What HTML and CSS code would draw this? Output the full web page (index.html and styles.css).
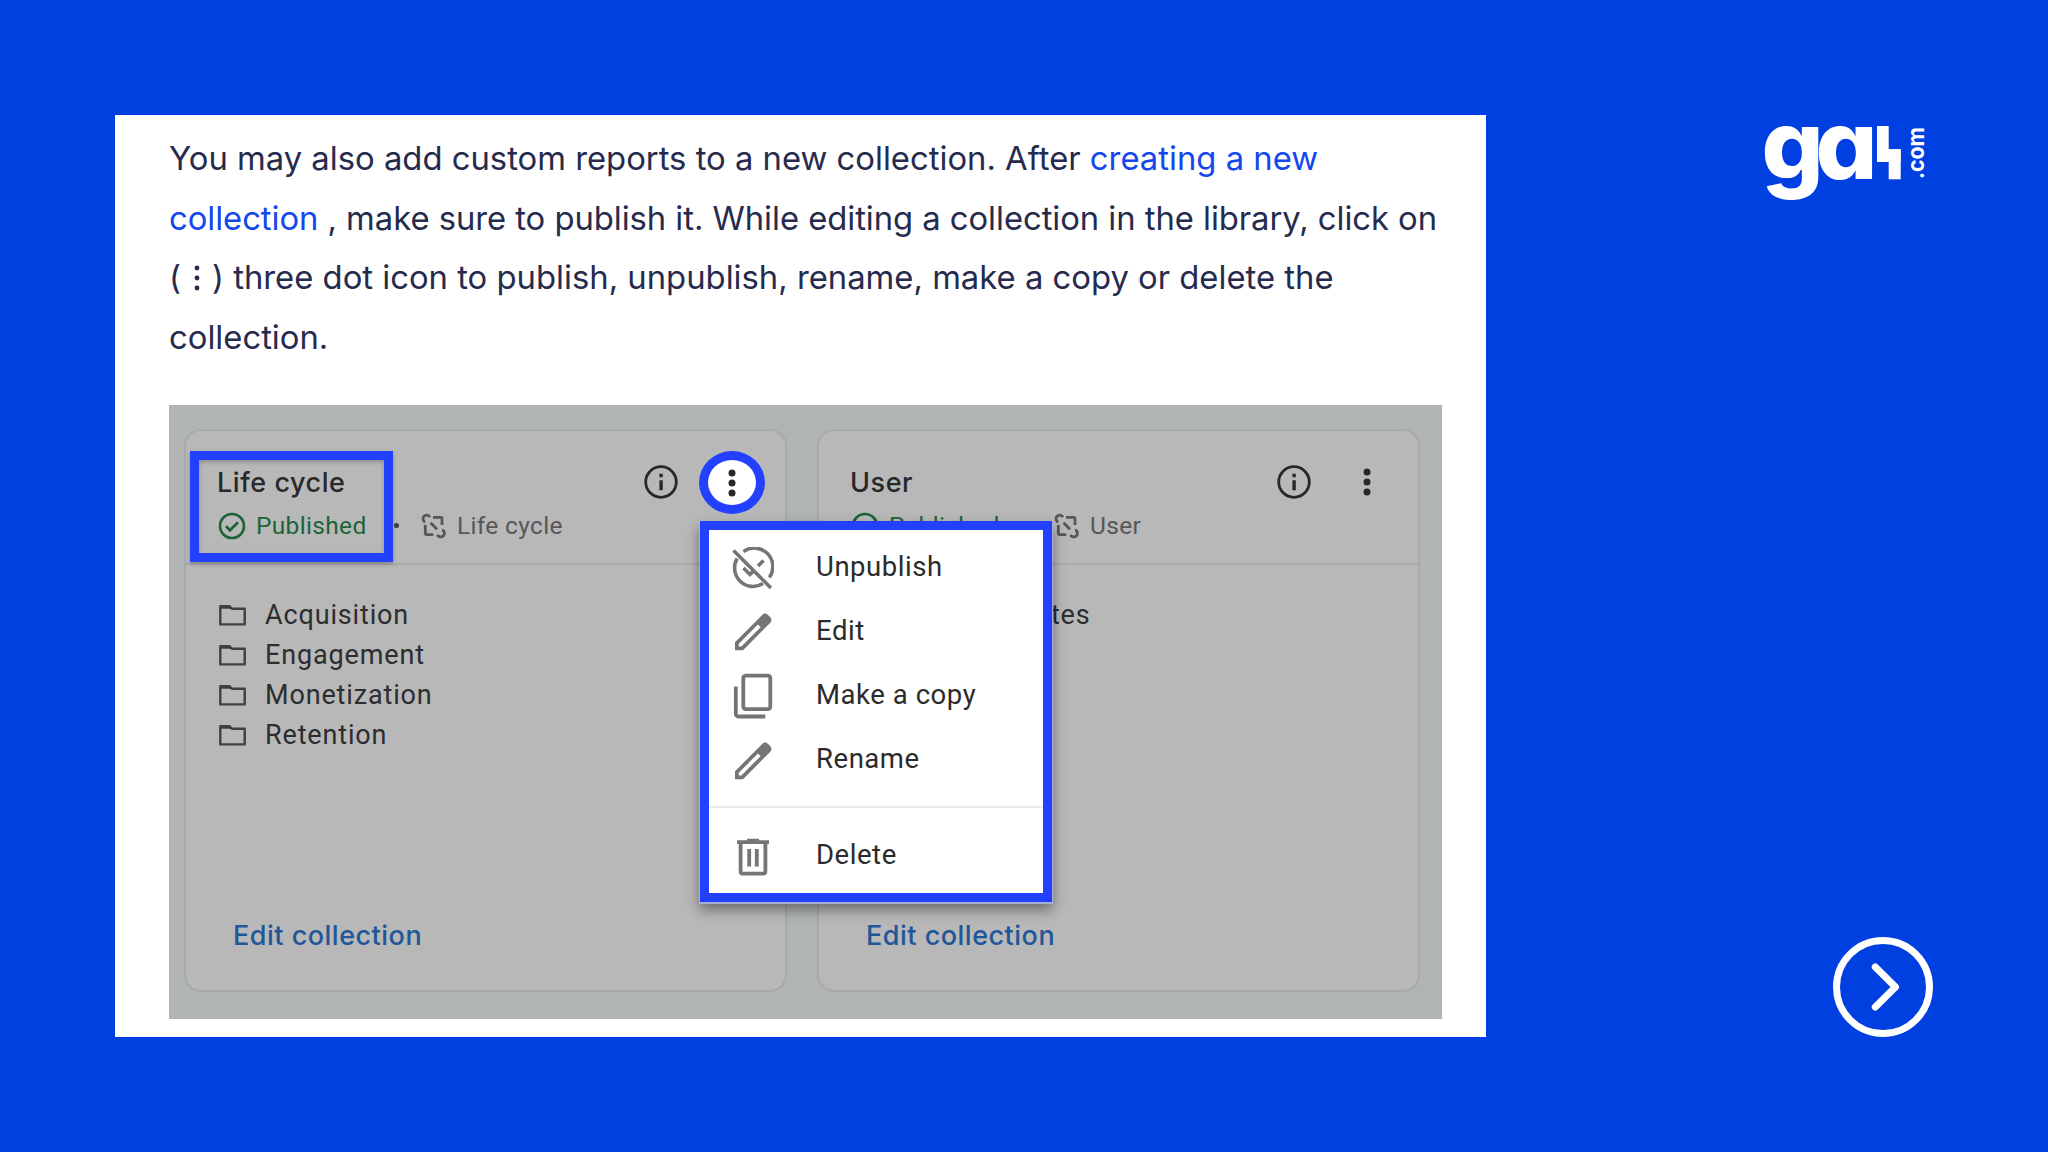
FILE: index.html
```html
<!DOCTYPE html>
<html lang="en">
<head>
    <meta charset="UTF-8">
    <meta name="viewport" content="width=device-width, initial-scale=1.0">
    <title>Publish a collection - ga4.com</title>
    <link rel="stylesheet" href="styles.css">
</head>
<body>
    <!-- Shared icons -->
    <svg class="sprite" aria-hidden="true">
        <symbol id="check-circle" viewBox="0 0 28 28">
            <circle cx="14" cy="14" r="12" fill="none" stroke="currentColor" stroke-width="2.6"/>
            <path d="M8 14.2l4 4 8-8" fill="none" stroke="currentColor" stroke-width="2.8"/>
        </symbol>
        <symbol id="linked" viewBox="0 0 26 26">
            <g fill="none" stroke="currentColor" stroke-width="2.8">
                <path d="M4.2 9.2A3.7 3.7 0 1 1 9 4.2"/>
                <path d="M12 4.4h8a1 1 0 0 1 1 1V12"/>
                <path d="M4.3 12v8.6a1 1 0 0 0 1 1h7"/>
                <path d="M21.2 16.8a3.7 3.7 0 1 1-4.8 5"/>
                <path d="M9.6 9.8l6.4 6.4"/>
            </g>
        </symbol>
        <symbol id="info" viewBox="0 0 34 34">
            <circle cx="17" cy="17" r="15.3" fill="none" stroke="currentColor" stroke-width="2.8"/>
            <path d="M15.4 15.3h3.4v10h-3.4zM15.4 8.8h3.4v3.4h-3.4z" fill="currentColor"/>
        </symbol>
        <symbol id="dots" viewBox="0 0 10 30">
            <circle cx="5" cy="5" r="3.5"/>
            <circle cx="5" cy="15" r="3.5"/>
            <circle cx="5" cy="25" r="3.5"/>
        </symbol>
        <symbol id="folder" viewBox="0 0 27 22">
            <path d="M1.3 2.3h8.9l2.6 2.4h12.9v15.7H1.3z" fill="none" stroke="currentColor" stroke-width="2.4" stroke-linejoin="round"/>
            <path d="M1 1h10l2.7 3.8H1z" fill="currentColor"/>
        </symbol>
        <symbol id="pencil" viewBox="0 0 38 38">
            <path fill="currentColor" fill-rule="evenodd" d="M1 29.2L28.2 2a4.2 4.2 0 0 1 5.8 0l2.1 2.1a4.2 4.2 0 0 1 0 5.8L9 37.2H1zM4.8 30.8v2.6h2.6L26.6 14.2l-2.7-2.6z"/>
        </symbol>
    </svg>

    <main class="article">
        <p class="article-text">
            You may also add custom reports to a new collection. After <a href="#">creating a new</a><br>
            <span class="tight"><a href="#">collection</a> , make sure to publish it. While editing a collection in the library, click on</span><br>
            (<svg class="inline-dots" viewBox="0 0 6 26"><circle cx="3" cy="3" r="2.4"/><circle cx="3" cy="13" r="2.4"/><circle cx="3" cy="23" r="2.4"/></svg>) three dot icon to publish, unpublish, rename, make a copy or delete the<br>
            collection.
        </p>

        <div class="library">
            <section class="card">
                <header class="card-head">
                    <div class="card-title">
                        <h2>Life cycle</h2>
                        <svg class="info-icon"><use href="#info"/></svg>
                        <svg class="dots-icon"><use href="#dots"/></svg>
                    </div>
                    <div class="card-meta">
                        <svg class="status-icon"><use href="#check-circle"/></svg>
                        <span class="status">Published</span>
                        <span class="separator"></span>
                        <svg class="linked-icon"><use href="#linked"/></svg>
                        <span>Life cycle</span>
                    </div>
                </header>
                <ul class="topics">
                    <li><svg><use href="#folder"/></svg>Acquisition</li>
                    <li><svg><use href="#folder"/></svg>Engagement</li>
                    <li><svg><use href="#folder"/></svg>Monetization</li>
                    <li><svg><use href="#folder"/></svg>Retention</li>
                </ul>
                <a class="edit-link" href="#">Edit collection</a>
            </section>

            <section class="card">
                <header class="card-head">
                    <div class="card-title">
                        <h2>User</h2>
                        <svg class="info-icon"><use href="#info"/></svg>
                        <svg class="dots-icon"><use href="#dots"/></svg>
                    </div>
                    <div class="card-meta">
                        <svg class="status-icon"><use href="#check-circle"/></svg>
                        <span class="status">Published</span>
                        <span class="separator"></span>
                        <svg class="linked-icon"><use href="#linked"/></svg>
                        <span>User</span>
                    </div>
                </header>
                <ul class="topics">
                    <li><svg><use href="#folder"/></svg>User attributes</li>
                </ul>
                <a class="edit-link" href="#">Edit collection</a>
            </section>

            <!-- Highlights and the open menu lie over the cards -->
            <div class="highlight-box"></div>
            <div class="highlight-circle"><svg><use href="#dots"/></svg></div>

            <ul class="menu">
                <li>
                    <svg viewBox="0 0 42 42" width="42" height="42" fill="none" stroke="currentColor" stroke-width="3.6">
                        <path d="M11.5 4.6A18.5 18.5 0 0 1 37.3 30.5"/>
                        <path d="M5.2 11.5A18.5 18.5 0 0 0 31 36.6"/>
                        <path d="M1.5 3.5L39 41"/>
                        <path d="M11.5 21l6.5 6.5 3.5-3.5"/>
                        <path d="M26 19l5.5-5.5"/>
                    </svg>
                    Unpublish
                </li>
                <li><svg width="38" height="38"><use href="#pencil"/></svg>Edit</li>
                <li>
                    <svg viewBox="0 0 40 46" width="40" height="46" fill="none" stroke="currentColor" stroke-width="3.8">
                        <rect x="10.3" y="2.6" width="27" height="33.5" rx="2.5"/>
                        <path d="M2.8 13.5V41a2.5 2.5 0 0 0 2.5 2.5h27"/>
                    </svg>
                    Make a copy
                </li>
                <li><svg width="38" height="38"><use href="#pencil"/></svg>Rename</li>
                <li class="menu-delete">
                    <svg viewBox="0 0 34 38" width="34" height="38" fill="none" stroke="currentColor" stroke-width="3.8">
                        <path d="M1 4.2h32M11 2.6h12"/>
                        <path d="M4.6 4.5v29a2.2 2.2 0 0 0 2.2 2.2h20.4a2.2 2.2 0 0 0 2.2-2.2v-29"/>
                        <path d="M13.2 11v17.5M20.8 11v17.5"/>
                    </svg>
                    Delete
                </li>
            </ul>
        </div>
    </main>

    <aside class="side">
        <svg class="logo" viewBox="0 0 170 90" width="170" height="90" role="img" aria-label="ga4.com">
            <text class="logo-name" x="-1.5" y="58" textLength="108" lengthAdjust="spacingAndGlyphs">ga</text>
            <!-- lightning shaped 4 -->
            <rect x="114" y="5" width="11.7" height="36"/>
            <rect x="114" y="28.3" width="23.7" height="12.7"/>
            <rect x="125.7" y="28.3" width="12" height="30"/>
            <text class="logo-tld" transform="translate(161.3 58) rotate(-90)" textLength="52" lengthAdjust="spacingAndGlyphs">.com</text>
        </svg>
        <a class="next" href="#" aria-label="Next">
            <svg viewBox="0 0 100 100" width="100" height="100" fill="none" stroke="#fff" stroke-width="7" stroke-linecap="round" stroke-linejoin="round">
                <circle cx="50" cy="50" r="46.5"/>
                <path d="M42.3 30l20.2 20-20.2 20"/>
            </svg>
        </a>
    </aside>
</body>
</html>
```
FILE: styles.css
```css
:root {
    --page-blue: #0040e0;
    --mark-blue: #2440ff;
    --card: #b8b8b8;
    --line: #a8a9ab;
    --text: #262b4d;
}
* {
    box-sizing: border-box;
    margin: 0;
    padding: 0;
}
body {
    width: 2048px;
    height: 1152px;
    padding: 115px;
    display: flex;
    justify-content: space-between;
    background: var(--page-blue);
    font-family: Roboto, sans-serif;
    overflow: hidden;
}
a {
    text-decoration: none;
}
ul {
    list-style: none;
}
svg {
    display: block;
    flex-shrink: 0;
}
.sprite {
    position: absolute;
    width: 0;
    height: 0;
}
.article {
    width: 1371px;
    height: 922px;
    padding: 14px 44px 0 54px;
    background: #fff;
}
.article-text {
    height: 276px;
    font-family: Inter, sans-serif;
    font-size: 32.8px;
    line-height: 59.6px;
    color: var(--text);
    white-space: nowrap;
}
.article-text .tight {
    letter-spacing: -0.05px;
}
.article-text a {
    color: #1447ee;
}
.inline-dots {
    display: inline-block;
    width: 6px;
    height: 26px;
    margin: 0 12px 0 13px;
    vertical-align: -2px;
    fill: var(--text);
}

/* Collections */
.library {
    position: relative;
    display: flex;
    gap: 30px;
    width: 1273px;
    height: 614px;
    padding: 24px 22px 27px 15px;
    background: #b1b4b5;
}
.card {
    display: flex;
    flex-direction: column;
    width: 603px;
    background: var(--card);
    border: 2px solid var(--line);
    border-radius: 17px;
}
.card-head {
    height: 134px;
    padding: 30px 46px 0 31px;
    border-bottom: 2px solid var(--line);
}
.card-title {
    display: flex;
    align-items: center;
    height: 42px;
    color: #26282a;
}
.card-title h2 {
    flex: 1;
    font-family: Inter, sans-serif;
    font-size: 27px;
    font-weight: 500;
    letter-spacing: 0.55px;
}
.info-icon {
    width: 34px;
    height: 34px;
    margin-right: 51px;
}
.dots-icon {
    width: 10px;
    height: 30px;
    fill: #26282a;
}
.card-meta {
    display: flex;
    align-items: center;
    height: 45px;
    padding-left: 1px;
    font-size: 24.5px;
    letter-spacing: 0.33px;
    color: #55575a;
}
.status-icon {
    width: 28px;
    height: 28px;
    margin-right: 10px;
    color: #1c6339;
}
.status {
    width: 138px;
    color: #1c6339;
}
.separator {
    width: 5px;
    height: 5px;
    margin-right: 22px;
    border-radius: 50%;
    background: #3c3e40;
}
.linked-icon {
    width: 26px;
    height: 26px;
    margin-right: 10px;
}
.topics {
    flex: 1;
    padding: 30px 33px;
    font-size: 27px;
    letter-spacing: 0.85px;
    word-spacing: 3px;
    color: #2c2d2f;
}
.topics li {
    display: flex;
    align-items: center;
    height: 40.1px;
}
.topics svg {
    width: 27px;
    height: 22px;
    margin-right: 19px;
    color: #3f4042;
}
.edit-link {
    padding: 0 0 36px 47px;
    font-family: Inter, sans-serif;
    font-size: 27px;
    font-weight: 500;
    line-height: 36px;
    letter-spacing: 0.5px;
    color: #215698;
}

/* Overlays */
.highlight-box {
    position: absolute;
    left: 21px;
    top: 46px;
    width: 203px;
    height: 111px;
    border: 9px solid var(--mark-blue);
    box-shadow: 0 2px 4px rgba(0, 0, 0, 0.25), inset 0 2px 4px rgba(0, 0, 0, 0.25);
}
.highlight-circle {
    position: absolute;
    left: 530px;
    top: 46px;
    width: 66px;
    height: 63px;
    display: flex;
    align-items: center;
    justify-content: center;
    border: 9px solid var(--mark-blue);
    border-radius: 50%;
    background: #fff;
}
.highlight-circle svg {
    width: 10px;
    height: 30px;
    fill: #26282a;
}
.menu {
    position: absolute;
    left: 531px;
    top: 116px;
    width: 352px;
    height: 381px;
    padding: 4px 0;
    border: 9px solid var(--mark-blue);
    background: #fff;
    box-shadow: 0 1px 0 1px #a9afd2, 0 7px 12px 1px rgba(0, 0, 0, 0.4);
    font-size: 27.5px;
    letter-spacing: 0.55px;
    color: #2b2b2b;
}
.menu li {
    display: grid;
    grid-template-columns: 44px 1fr;
    column-gap: 41px;
    align-items: center;
    height: 64.2px;
    padding-left: 22px;
}
.menu svg {
    justify-self: center;
    margin-top: 4px;
    color: #757575;
}
.menu .menu-delete {
    height: 96px;
    margin-top: 15px;
    border-top: 2px solid #ebebeb;
}

/* Right side */
.side {
    display: flex;
    flex-direction: column;
    justify-content: space-between;
    align-items: flex-end;
    width: 200px;
}
.logo {
    margin-top: 6px;
    fill: #fff;
    overflow: visible;
}
.logo-name {
    font: 800 96px Inter, sans-serif;
    font-feature-settings: "cv11";
    letter-spacing: -8px;
}
.logo-tld {
    font: 700 23px Inter, sans-serif;
}
```
